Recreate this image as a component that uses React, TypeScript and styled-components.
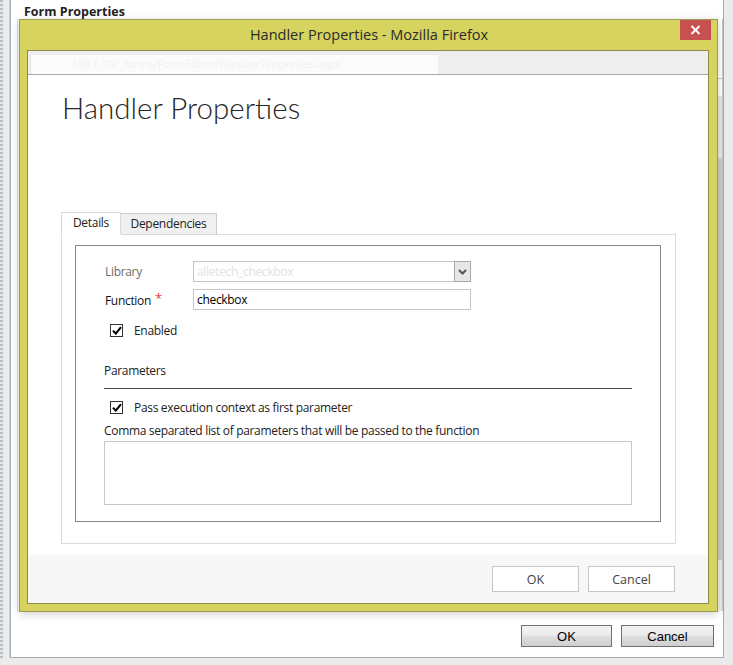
import React from "react";
import styled, { createGlobalStyle } from "styled-components";

const Global = createGlobalStyle`
  html, body { margin: 0; padding: 0; background: #ffffff; }
  body { width: 733px; height: 665px; overflow: hidden; font-family: "Open Sans", "Noto Sans", sans-serif; }
  * { box-sizing: border-box; }
`;

const UI = `"Open Sans", "Noto Sans", "DejaVu Sans", sans-serif`;

const Screen = styled.div`
  position: relative;
  width: 733px;
  height: 665px;
  background: #ebebeb;
  display: flex;
  flex-direction: column;
  overflow: hidden;
`;

const DesktopRow = styled.div`
  display: flex;
  height: 658px;
`;

const LeftStrip = styled.div`
  width: 10px;
  display: flex;
`;

const DashedEdge = styled.div`
  width: 3px;
  background: repeating-linear-gradient(to bottom, #b9bec4 0 2px, #e4e6e8 2px 4px);
`;

const StripFill = styled.div`
  flex: 1;
  background: #ebebeb;
  border-right: 1px solid #cfd3d7;
`;

const OuterDialog = styled.div`
  width: 714px;
  background: #ffffff;
  border-left: 1px solid #a3a9b1;
  border-right: 1px solid #a3a9b1;
  border-bottom: 1px solid #a3a9b1;
  display: flex;
  flex-direction: column;
`;

const OuterTitle = styled.div`
  height: 19px;
  padding: 4px 0 0 13px;
  font-family: ${UI};
  font-weight: 700;
  font-size: 12.5px;
  line-height: 15px;
  color: #222;
  white-space: nowrap;
`;

const OuterBody = styled.div`
  flex: 1;
  display: flex;
`;

const OuterPanel = styled.div`
  flex: 1;
  margin-left: 6px;
  border-left: 1px solid #dedede;
  border-bottom: 1px solid #dedede;
`;

const OuterScroll = styled.div`
  width: 7px;
  border-right: 1px solid #c8c8c8;
  background: linear-gradient(
    to bottom,
    #ffffff 0 59px,
    #c9c9c9 59px 60px,
    #ffffff 60px 77px,
    #e8e8e8 77px 139px,
    #cdcdcd 139px 541px,
    #ededed 541px 592px
  );
`;

const OuterFooter = styled.div`
  height: 46px;
  display: flex;
  justify-content: flex-end;
  align-items: flex-start;
  gap: 9px;
  padding: 14px 9px 0 0;
`;

const ClassicButton = styled.button<{ $w: number }>`
  width: ${(p) => p.$w}px;
  height: 22px;
  border: 1px solid #707070;
  border-radius: 0;
  background: linear-gradient(to bottom, #f2f2f2 0%, #ebebeb 45%, #dddddd 55%, #cfcfcf 100%);
  font-family: "Liberation Sans", Arial, sans-serif;
  font-size: 13px;
  color: #000;
  padding: 0;
`;

const RightStrip = styled.div`
  flex: 1;
  background: #ebebeb;
`;

const BottomStrip = styled.div`
  flex: 1;
  background: #ebebeb;
`;

/* ---------- Firefox window ---------- */

const FirefoxWindow = styled.div`
  position: absolute;
  left: 19px;
  top: 19px;
  width: 699px;
  height: 593px;
  background: #d6d35f;
  border: 1px solid #9d9b52;
  box-shadow: 0 2px 8px rgba(0, 0, 0, 0.18);
  display: flex;
  flex-direction: column;
  padding: 0 8px 7px 7px;
`;

const TitleBar = styled.div`
  height: 30px;
  display: grid;
  grid-template-columns: 1fr auto 1fr;
  align-items: start;
  margin: 0 -2px 0 0;
`;

const TitleText = styled.div`
  grid-column: 2;
  padding-top: 6px;
  font-family: ${UI};
  font-size: 14.5px;
  line-height: 18px;
  color: #2b2b2b;
  white-space: nowrap;
`;

const CloseButton = styled.div`
  grid-column: 3;
  justify-self: end;
  width: 31px;
  height: 20px;
  background: #c75050;
  display: flex;
  align-items: center;
  justify-content: center;
`;

const ContentFrame = styled.div`
  flex: 1;
  border: 1px solid #8e8c4c;
  background: #ffffff;
  display: flex;
  flex-direction: column;
`;

const UrlBar = styled.div`
  height: 24px;
  background: #eeeeee;
  border-bottom: 1px solid #a7abb0;
  padding: 4px 0 0 2px;
  display: flex;
`;

const UrlField = styled.div`
  width: 408px;
  background: #fbfbfb;
  border-left: 1px solid #e2e2e2;
  font-family: ${UI};
  font-size: 11px;
  line-height: 18px;
  color: #f0f0f0;
  padding-left: 40px;
  white-space: nowrap;
  overflow: hidden;
`;

const Page = styled.div`
  flex: 1;
  display: flex;
  flex-direction: column;
  padding: 0 32px 0 33px;
`;

const Heading = styled.h1`
  margin: 15px 0 0 1px;
  font-family: Lato, ${UI};
  font-weight: 300;
  font-size: 29.5px;
  line-height: 36px;
  color: #262626;
`;

const Tabs = styled.div`
  margin-top: 86px;
  display: flex;
  align-items: flex-end;
  position: relative;
  z-index: 1;
  margin-bottom: -1px;
`;

const Tab = styled.div<{ $active?: boolean; $w: number }>`
  width: ${(p) => p.$w}px;
  height: ${(p) => (p.$active ? 23 : 22)}px;
  border: 1px solid ${(p) => (p.$active ? "#d9d9d9" : "#cccccc")};
  border-bottom: ${(p) => (p.$active ? "1px solid #ffffff" : "1px solid #d9d9d9")};
  border-left: ${(p) => (p.$active ? "1px solid #d9d9d9" : "none")};
  background: ${(p) => (p.$active ? "#ffffff" : "#f0f0f0")};
  font-family: ${UI};
  font-size: 12px;
  letter-spacing: -0.3px;
  line-height: 20px;
  color: #222;
  text-align: center;
`;

const TabPanel = styled.div`
  height: 310px;
  border: 1px solid #dcdcdc;
  padding: 10px 14px 21px 13px;
  display: flex;
`;

const InnerBox = styled.div`
  flex: 1;
  border: 1px solid #858585;
  padding: 15px 28px 0 28px;
  display: flex;
  flex-direction: column;
  font-family: ${UI};
  font-size: 12px;
  letter-spacing: -0.32px;
`;

const FieldRow = styled.div<{ $gap?: number }>`
  display: flex;
  align-items: center;
  height: 21px;
  margin-bottom: ${(p) => p.$gap ?? 0}px;
`;

const Label = styled.div<{ $muted?: boolean }>`
  width: 89px;
  padding-left: 1px;
  color: ${(p) => (p.$muted ? "#6d6d6d" : "#111")};
  white-space: nowrap;
`;

const Required = styled.span`
  color: #e23a3a;
  margin-left: 4px;
  font-size: 13px;
  position: relative;
  top: -2px;
`;

const SelectBox = styled.div`
  width: 278px;
  height: 21px;
  border: 1px solid #c6c6c6;
  display: flex;
  align-items: stretch;
`;

const SelectText = styled.div`
  flex: 1;
  padding-left: 3px;
  line-height: 19px;
  color: #e2e2e2;
`;

const SelectButton = styled.div`
  width: 17px;
  background: #e6e6e6;
  border: 1px solid #a8a8a8;
  margin: -1px -1px -1px 0;
  display: flex;
  align-items: center;
  justify-content: center;
`;

const TextInput = styled.div`
  width: 278px;
  height: 21px;
  border: 1px solid #c6c6c6;
  padding-left: 3px;
  line-height: 19px;
  color: #000;
`;

const CheckRow = styled.div<{ $top: number }>`
  display: flex;
  align-items: center;
  gap: 11px;
  margin-top: ${(p) => p.$top}px;
  padding-left: 6px;
  height: 14px;
  color: #222;
`;

const CheckBox = styled.div`
  width: 13px;
  height: 13px;
  border: 1px solid #333;
  background: #fff;
  display: flex;
  align-items: center;
  justify-content: center;
`;

const SectionTitle = styled.div`
  margin-top: 25px;
  color: #222;
  height: 17px;
`;

const Rule = styled.div`
  margin-top: 9px;
  height: 1px;
  background: #4a4a4a;
`;

const HelpText = styled.div`
  margin-top: 8px;
  color: #222;
  height: 17px;
`;

const TextArea = styled.div`
  margin-top: 2px;
  height: 64px;
  border: 1px solid #c6c6c6;
`;

const Footer = styled.div`
  height: 48px;
  background: #f7f7f7;
  display: flex;
  justify-content: flex-end;
  align-items: flex-start;
  gap: 9px;
  padding: 11px 33px 0 0;
`;

const FlatButton = styled.button`
  width: 87px;
  height: 26px;
  border: 1px solid #c6c6c6;
  background: #ffffff;
  font-family: ${UI};
  font-size: 12.5px;
  color: #444;
  padding: 0;
`;

const Check = () => (
  <svg width="10" height="9" viewBox="0 0 10 9">
    <path d="M1 4.6 L3.8 7.6 L9 1.2" fill="none" stroke="#000" strokeWidth="2.1" />
  </svg>
);

export default function App() {
  return (
    <>
      <Global />
      <Screen>
        <DesktopRow>
          <LeftStrip>
            <DashedEdge />
            <StripFill />
          </LeftStrip>
          <OuterDialog>
            <OuterTitle>Form Properties</OuterTitle>
            <OuterBody>
              <OuterPanel />
              <OuterScroll />
            </OuterBody>
            <OuterFooter>
              <ClassicButton $w={91}>OK</ClassicButton>
              <ClassicButton $w={93}>Cancel</ClassicButton>
            </OuterFooter>
          </OuterDialog>
          <RightStrip />
        </DesktopRow>
        <BottomStrip />

        <FirefoxWindow>
          <TitleBar>
            <TitleText>Handler Properties - Mozilla Firefox</TitleText>
            <CloseButton>
              <svg width="11" height="10" viewBox="0 0 11 10">
                <path d="M1.5 1 L9.5 9 M9.5 1 L1.5 9" stroke="#fff" strokeWidth="1.8" />
              </svg>
            </CloseButton>
          </TitleBar>
          <ContentFrame>
            <UrlBar>
              <UrlField>168.1.10/_forms/FormEditor/HandlerProperties.aspx</UrlField>
            </UrlBar>
            <Page>
              <Heading>Handler Properties</Heading>
              <Tabs>
                <Tab $active $w={60}>Details</Tab>
                <Tab $w={96}>Dependencies</Tab>
              </Tabs>
              <TabPanel>
                <InnerBox>
                  <FieldRow $gap={7}>
                    <Label $muted>Library</Label>
                    <SelectBox>
                      <SelectText>alletech_checkbox</SelectText>
                      <SelectButton>
                        <svg width="9" height="6" viewBox="0 0 9 6">
                          <path d="M1 1 L4.5 4.5 L8 1" fill="none" stroke="#555" strokeWidth="2" />
                        </svg>
                      </SelectButton>
                    </SelectBox>
                  </FieldRow>
                  <FieldRow>
                    <Label>
                      Function<Required>*</Required>
                    </Label>
                    <TextInput>checkbox</TextInput>
                  </FieldRow>
                  <CheckRow $top={13}>
                    <CheckBox>
                      <Check />
                    </CheckBox>
                    Enabled
                  </CheckRow>
                  <SectionTitle>Parameters</SectionTitle>
                  <Rule />
                  <CheckRow $top={11}>
                    <CheckBox>
                      <Check />
                    </CheckBox>
                    Pass execution context as first parameter
                  </CheckRow>
                  <HelpText>Comma separated list of parameters that will be passed to the function</HelpText>
                  <TextArea />
                </InnerBox>
              </TabPanel>
            </Page>
            <Footer>
              <FlatButton>OK</FlatButton>
              <FlatButton>Cancel</FlatButton>
            </Footer>
          </ContentFrame>
        </FirefoxWindow>
      </Screen>
    </>
  );
}
